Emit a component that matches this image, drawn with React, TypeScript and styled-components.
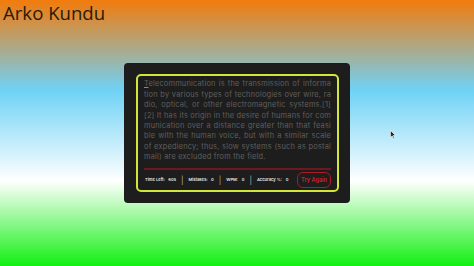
import React from 'react';
import styled, { createGlobalStyle } from "styled-components";

const GlobalStyle = createGlobalStyle`
  html, body {
    margin: 0;
    padding: 0;
  }
  body {
    font-family: "Open Sans", "Noto Sans", sans-serif;
  }
`

const lines = [
    'Telecommunication is the transmission of informa',
    'tion by various types of technologies over wire, ra',
    'dio, optical, or other electromagnetic systems.[1]',
    '[2] It has its origin in the desire of humans for com',
    'munication over a distance greater than that feasi',
    'ble with the human voice, but with a similar scale',
    'of expediency; thus, slow systems (such as postal',
    'mail) are excluded from the field.',
];

const stats = [
    {label: 'Time Left:', value: '60s'},
    {label: 'Mistakes:', value: '0'},
    {label: 'WPM:', value: '0'},
    {label: 'Accuracy %:', value: '0'},
];

const App: React.FC = () => {
    return (
        <>
            <GlobalStyle/>
            <Page>
                <Title>Arko Kundu</Title>
                <Card>
                    <Board>
                        <Paragraph>
                            {lines.map((line, i) => (
                                <Line key={i} last={i === lines.length - 1}>
                                    {i === 0 ? <><Caret>T</Caret>{line.slice(1)}</> : line}
                                </Line>
                            ))}
                        </Paragraph>
                        <Rule/>
                        <Footer>
                            {stats.map((s, i) => (
                                <React.Fragment key={s.label}>
                                    {i > 0 && <Sep>|</Sep>}
                                    <Stat>{s.label}<b>{s.value}</b></Stat>
                                </React.Fragment>
                            ))}
                            <TryAgain>Try Again</TryAgain>
                        </Footer>
                    </Board>
                </Card>
                <Cursor width="6" height="9" viewBox="0 0 6 9">
                    <path d="M0.5 0.5 L0.5 7.5 L2.2 5.9 L3.4 8.5 L4.4 8 L3.3 5.5 L5.5 5.5 Z" fill="#1b2a33" stroke="#fff" strokeWidth="0.6"/>
                </Cursor>
            </Page>
        </>
    );
};

const Page = styled.div`
  position: relative;
  height: 100vh;
  display: grid;
  grid-template-rows: 1fr auto 1fr;
  justify-items: center;
  background: linear-gradient(to bottom, #f27b0c 0%, #6fd2f6 34%, #ffffff 68%, #12f012 100%);
  overflow: hidden;
`
const Title = styled.h1`
  justify-self: start;
  align-self: start;
  margin: 0 0 0 3px;
  font-family: "Open Sans", sans-serif;
  font-weight: 400;
  font-size: 18.6px;
  line-height: 26px;
  color: #2a1a08;
`
const Card = styled.div`
  width: 226px;
  box-sizing: border-box;
  padding: 11px 11px 11px 12px;
  background: #1d1d1d;
  border-radius: 4px;
`
const Board = styled.div`
  box-sizing: border-box;
  border: 2px solid #d3e43b;
  border-radius: 5px;
  padding: 3px 6px 2px 6px;
`
const Paragraph = styled.div`
  font-family: "Inter", "Noto Sans", sans-serif;
  font-size: 7.4px;
  line-height: 10.45px;
  letter-spacing: 0.2px;
  color: #5f5f5f;
`
const Line = styled.div<{ last?: boolean }>`
  white-space: nowrap;
  text-align: justify;
  text-align-last: ${p => p.last ? 'left' : 'justify'};
`
const Caret = styled.span`
  text-decoration: underline;
  text-decoration-color: #888;
`
const Rule = styled.div`
  height: 2px;
  margin: 5px 0 0;
  background: #6a1a1f;
`
const Footer = styled.div`
  display: flex;
  align-items: center;
  padding: 2px 0 0 1px;
  font-family: "Inter", sans-serif;
  font-size: 4.1px;
  color: #e8e8e8;
  white-space: nowrap;
`
const Stat = styled.span`
  font-weight: 600;
  b {
    margin-left: 3.5px;
    font-weight: 600;
  }
`
const Sep = styled.span`
  margin: 0 5px;
  font-size: 8px;
  font-weight: 300;
  color: #d8d8d8;
`
const TryAgain = styled.button`
  margin-left: auto;
  width: 34px;
  height: 16px;
  padding: 0;
  background: transparent;
  border: 1.5px solid #b01a22;
  border-radius: 6px;
  color: #d0202a;
  font-family: "Inter", sans-serif;
  font-size: 5.6px;
  font-weight: 600;
  white-space: nowrap;
`
const Cursor = styled.svg`
  position: absolute;
  left: 390px;
  top: 130px;
`
export default App;
